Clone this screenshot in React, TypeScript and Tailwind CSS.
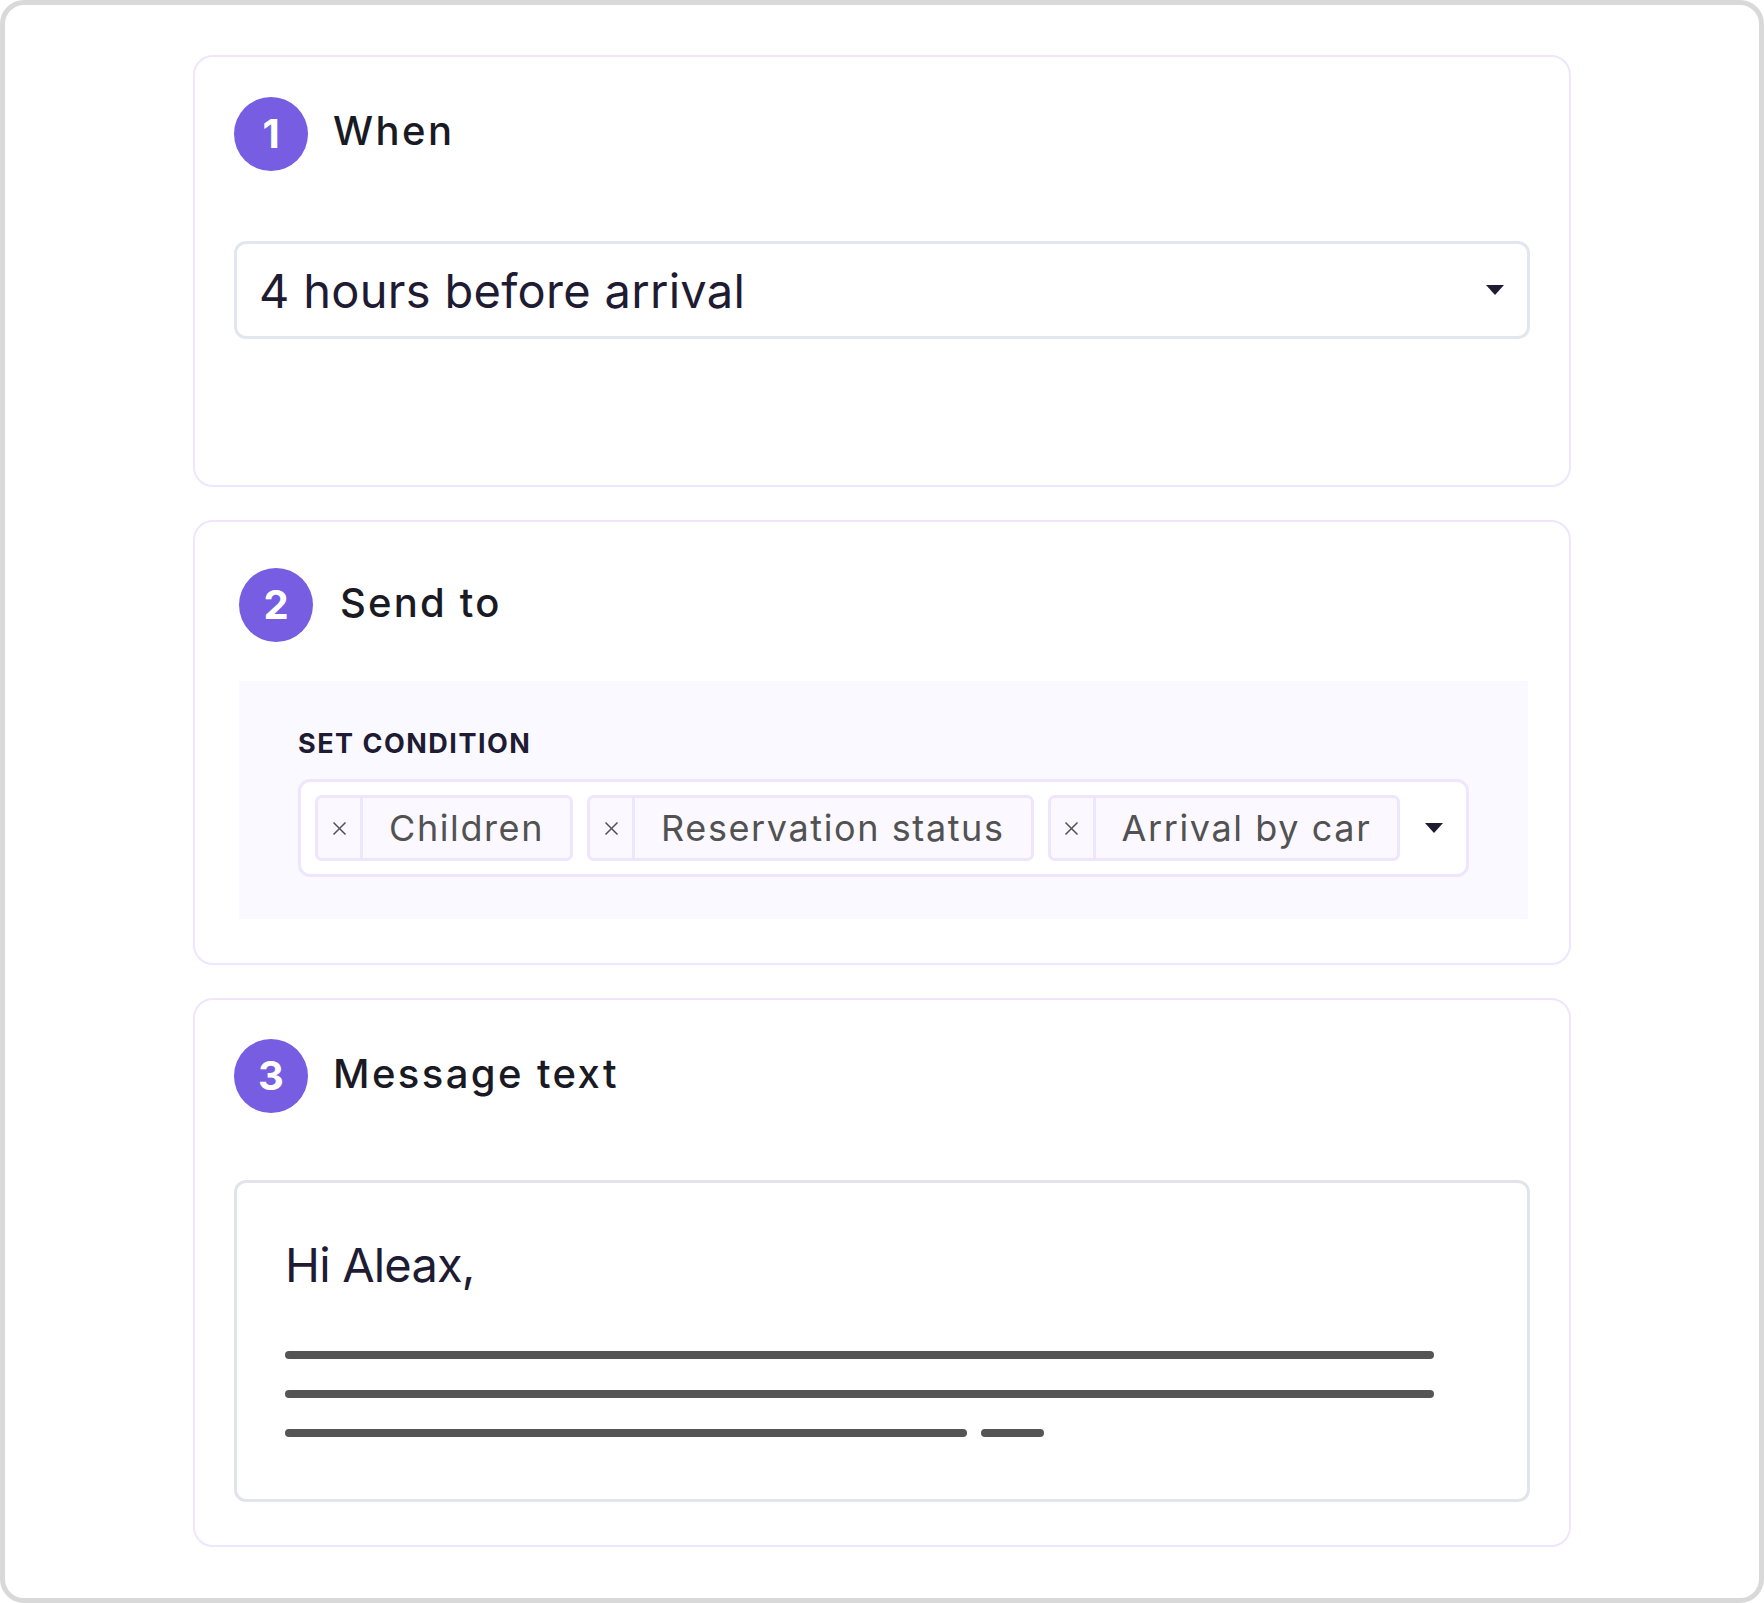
const font = { fontFamily: "Inter, 'Noto Sans', sans-serif" };

function StepBadge({ n }: { n: number }) {
  return (
    <div className="size-[74px] shrink-0 rounded-full bg-[#765de2] flex items-center justify-center text-white text-[40px] font-bold leading-none">
      {n}
    </div>
  );
}

function Caret() {
  return (
    <svg width="18" height="10" viewBox="0 0 18 10" className="shrink-0">
      <path d="M0 0 H18 L9 10 Z" fill="#1e1b33" />
    </svg>
  );
}

function Tag({ label }: { label: string }) {
  return (
    <div className="h-[66px] flex items-stretch border-[3px] border-[#efe5fd] rounded-[7px] bg-[#fbf9ff]">
      <div className="w-[42px] flex items-center justify-center">
        <svg width="15" height="15" viewBox="0 0 15 15">
          <path d="M1.5 1.5 L13.5 13.5 M13.5 1.5 L1.5 13.5" stroke="#525252" strokeWidth="1.5" />
        </svg>
      </div>
      <div className="border-l-[3px] border-[#efe5fd] px-[26px] flex items-center text-[36px] tracking-[1.6px] text-[#525252] leading-none">
        {label}
      </div>
    </div>
  );
}

export default function App() {
  return (
    <div
      style={font}
      className="w-[1764px] h-[1603px] bg-white border-[5px] border-[#d9d9d9] rounded-[24px] pt-[50px]"
    >
      <div className="w-[1378px] mx-auto flex flex-col gap-[33px]">
        {/* step 1 */}
        <section className="h-[432px] border-2 border-[#efe5fd] rounded-[20px] px-[39px] pt-[40px]">
          <div className="flex items-center gap-[25px]">
            <StepBadge n={1} />
            <h2 className="text-[40px] tracking-[2.4px] font-medium text-[#1a1a24] leading-none pb-[6px]">When</h2>
          </div>
          <div className="mt-[70px] h-[98px] border-[3px] border-[#e2e6ee] rounded-[12px] flex items-center justify-between pl-[22px] pr-[23px]">
            <span className="text-[47px] tracking-[0.3px] text-[#1e1b33] leading-none">4 hours before arrival</span>
            <Caret />
          </div>
        </section>

        {/* step 2 */}
        <section className="h-[445px] border-2 border-[#efe5fd] rounded-[20px] pl-[44px] pr-[41px] pt-[46px]">
          <div className="flex items-center gap-[27px]">
            <StepBadge n={2} />
            <h2 className="text-[40px] tracking-[2.2px] font-medium text-[#1a1a24] leading-none pb-[4px]">Send to</h2>
          </div>
          <div className="mt-[39px] h-[238px] bg-[#faf9ff] px-[59px] pt-[49px]">
            <div className="text-[27px] tracking-[1.5px] font-bold text-[#1e1b33] leading-none uppercase">Set condition</div>
            <div className="mt-[22px] h-[98px] bg-white border-[3px] border-[#efe5fd] rounded-[12px] flex items-center gap-[14px] pl-[14px] pr-[23px]">
              <Tag label="Children" />
              <Tag label="Reservation status" />
              <Tag label="Arrival by car" />
              <div className="ml-auto">
                <Caret />
              </div>
            </div>
          </div>
        </section>

        {/* step 3 */}
        <section className="h-[549px] border-2 border-[#efe5fd] rounded-[20px] px-[39px] pt-[39px]">
          <div className="flex items-center gap-[25px]">
            <StepBadge n={3} />
            <h2 className="text-[40px] tracking-[2.4px] font-medium text-[#1a1a24] leading-none pb-[5px]">Message text</h2>
          </div>
          <div className="mt-[67px] h-[322px] border-[3px] border-[#e2e4ec] rounded-[12px] pl-[48px] pt-[58px]">
            <p className="text-[47px] tracking-[-0.8px] text-[#1e1b33] leading-none">Hi Aleax,</p>
            <div className="mt-[63px] flex flex-col gap-[31px] w-[1149px]">
              <div className="h-[8px] rounded-full bg-[#555555]" />
              <div className="h-[8px] rounded-full bg-[#555555]" />
              <div className="flex gap-[14px]">
                <div className="h-[8px] w-[682px] rounded-full bg-[#555555]" />
                <div className="h-[8px] w-[63px] rounded-full bg-[#555555]" />
              </div>
            </div>
          </div>
        </section>
      </div>
    </div>
  );
}
